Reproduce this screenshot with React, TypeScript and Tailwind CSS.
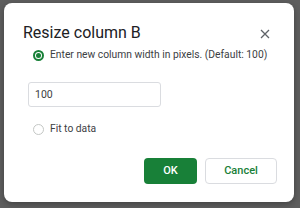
export default function App() {
  return (
    <div className="w-[300px] h-[208px] bg-[#5e5e5e] pt-[3px] pl-[4px] font-['Roboto',sans-serif]">
      <div className="w-[290px] h-[199px] rounded-[8px] bg-white flex flex-col pt-[20px] pl-[19px] pr-[17px] pb-[18px] shadow-[0_2px_6px_rgba(0,0,0,0.3)]">
        <div className="flex items-center justify-between h-[20px]">
          <span className="text-[16px] leading-[20px] text-[#202124]">Resize column B</span>
          <svg width="10" height="10" viewBox="0 0 10 10" className="mr-[7px] mt-[1px]">
            <path d="M1 1L9 9M9 1L1 9" stroke="#5f6368" strokeWidth="1.3" />
          </svg>
        </div>

        <div className="mt-[6px] pl-[10px] flex items-center gap-[6px] h-[12px]">
          <span className="w-[11px] h-[11px] shrink-0 rounded-full border-[2px] border-[#188038] flex items-center justify-center">
            <span className="w-[5px] h-[5px] rounded-full bg-[#188038]" />
          </span>
          <span className="text-[10.3px] leading-[12px] text-[#3c4043] whitespace-nowrap">
            Enter new column width in pixels. (Default: 100)
          </span>
        </div>

        <div className="mt-[21px] ml-[5px] w-[133px] h-[25px] border border-[#dadce0] rounded-[3px] flex items-center pl-[6px] text-[10.5px] text-[#3c4043]">
          100
        </div>

        <div className="mt-[16px] pl-[10px] flex items-center gap-[6px] h-[12px]">
          <span className="w-[11px] h-[11px] shrink-0 rounded-full border border-[#c4c7c5]" />
          <span className="text-[10.3px] leading-[12px] text-[#3c4043]">Fit to data</span>
        </div>

        <div className="mt-auto flex justify-end gap-[8px]">
          <button className="w-[53px] h-[26px] rounded-[4px] bg-[#188038] text-white text-[11px] font-medium">
            OK
          </button>
          <button className="w-[72px] h-[26px] rounded-[4px] border border-[#dadce0] bg-white text-[#188038] text-[11px] font-medium">
            Cancel
          </button>
        </div>
      </div>
    </div>
  )
}
